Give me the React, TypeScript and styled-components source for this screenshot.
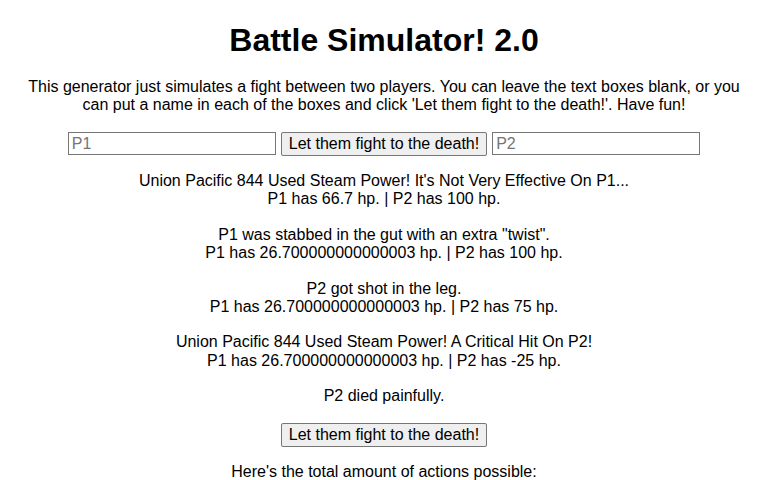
import { useState } from "react";
import styled, { createGlobalStyle } from "styled-components";

const GlobalStyle = createGlobalStyle`
    body {
        margin: 8px;
        background: #fff;
        color: #000;
        font-family: "Liberation Sans", Arial, sans-serif;
        font-size: 16px;
    }
`

const Page = styled.div`
    text-align: center;
`

const Title = styled.h1`
    font-size: 32px;
    font-weight: bold;
    margin: 13.5px 0 19.5px;
`

const Intro = styled.p`
    margin: 16px 12px 17.5px;
`

const Controls = styled.div`
    display: flex;
    justify-content: center;
    align-items: center;
    gap: 5px;
`

const NameBox = styled.input`
    box-sizing: border-box;
    width: 208px;
    height: 23px;
    margin: 0;
    padding: 1px 3px;
    border: 1px solid #767676;
    border-radius: 0;
    font-family: "Liberation Sans", Arial, sans-serif;
    font-size: 16px;
    color: #000;

    &::placeholder {
        color: #757575;
    }
`

const FightButton = styled.button`
    box-sizing: border-box;
    height: 24px;
    margin: 0;
    padding: 0 7px;
    background: #efefef;
    border: 1px solid #767676;
    border-radius: 2px;
    font-family: "Liberation Sans", Arial, sans-serif;
    font-size: 16px;
    color: #000;
    cursor: pointer;
`

const Log = styled.div`
    margin-top: 16.5px;
`

const Entry = styled.p`
    margin: 0 0 17px;
    line-height: 18.4px;
`

const Footer = styled.p`
    margin: 16px 0;
`

type Turn = { text: string; p1: string; p2: string } | { text: string; end: true };

const initialLog: Turn[] = [
    { text: "Union Pacific 844 Used Steam Power! It's Not Very Effective On P1...", p1: "66.7", p2: "100" },
    { text: 'P1 was stabbed in the gut with an extra "twist".', p1: "26.700000000000003", p2: "100" },
    { text: "P2 got shot in the leg.", p1: "26.700000000000003", p2: "75" },
    { text: "Union Pacific 844 Used Steam Power! A Critical Hit On P2!", p1: "26.700000000000003", p2: "-25" },
    { text: "P2 died painfully.", end: true },
];

const App = () => {
    const [p1, setP1] = useState("");
    const [p2, setP2] = useState("");
    const [log] = useState<Turn[]>(initialLog);

    return (
        <>
        <GlobalStyle />
        <Page>
            <Title>Battle Simulator! 2.0</Title>
            <Intro>
                This generator just simulates a fight between two players. You can leave the text boxes blank, or you can put a name in each of the boxes and click 'Let them fight to the death!'. Have fun!
            </Intro>
            <Controls>
                <NameBox placeholder="P1" value={p1} onChange={e => setP1(e.target.value)} />
                <FightButton>Let them fight to the death!</FightButton>
                <NameBox placeholder="P2" value={p2} onChange={e => setP2(e.target.value)} />
            </Controls>
            <Log>
                {log.map((turn, i) => (
                    <Entry key={i}>
                        {turn.text}
                        {"p1" in turn && <><br />P1 has {turn.p1} hp. | P2 has {turn.p2} hp.</>}
                    </Entry>
                ))}
                <FightButton>Let them fight to the death!</FightButton>
            </Log>
            <Footer>Here's the total amount of actions possible:</Footer>
        </Page>
        </>
    )
};

export default App;
